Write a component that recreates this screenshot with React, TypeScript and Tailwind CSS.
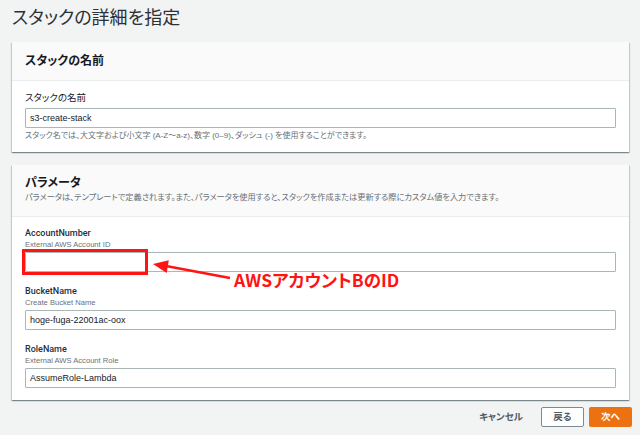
import React from "react";

const jp = "[font-family:'Liberation_Sans','Noto_Sans_CJK_JP',sans-serif] [font-feature-settings:'palt']";

function Field({ label, desc, value, mt }: { label: string; desc: string; value: string; mt: string }) {
  return (
    <div className={mt}>
      <div className="h-[12px] text-[9px] leading-[12px] font-medium text-[#232f3e] [font-family:Roboto,sans-serif]">{label}</div>
      <div className="h-[11px] text-[7.6px] leading-[11px] text-[#687078]">{desc}</div>
      <div className="mt-[2px] h-[20px] border border-[#aab7b8] rounded-[1px] bg-white px-[4px] text-[9px] leading-[18px] text-[#16191f]">
        {value}
      </div>
    </div>
  );
}

export default function App() {
  return (
    <div className={`relative w-[640px] h-[435px] overflow-hidden bg-[#f2f3f3] pl-[12px] pr-[11px] ${jp}`}>
      <div className="h-[42px] pt-[6px] text-[18px] leading-[24px] text-[#2d3035] font-normal">スタックの詳細を指定</div>

      {/* Card 1 */}
      <div className="bg-white shadow-[0_1px_1px_0_rgba(0,28,36,0.3),1px_1px_1px_0_rgba(0,28,36,0.15),-1px_1px_1px_0_rgba(0,28,36,0.15)]">
        <div className="h-[39px] bg-[#fafafa] border-b border-[#eaeded] px-[13px] flex items-center text-[12px] font-bold text-[#16191f]">
          スタックの名前
        </div>
        <div className="px-[13px] pt-[11px] pb-[10px]">
          <div className="h-[12px] text-[9.5px] leading-[12px] text-[#16191f]">スタックの名前</div>
          <div className="mt-[4px] h-[20px] border border-[#aab7b8] rounded-[1px] px-[4px] text-[9px] leading-[18px] text-[#16191f]">
            s3-create-stack
          </div>
          <div className="mt-[2px] h-[12px] text-[8px] leading-[12px] text-[#687078]">
            スタック名では、大文字および小文字 (A-Z〜a-z)、数字 (0–9)、ダッシュ (-) を使用することができます。
          </div>
        </div>
      </div>

      {/* Card 2 */}
      <div className="mt-[13px] bg-white shadow-[0_1px_1px_0_rgba(0,28,36,0.3),1px_1px_1px_0_rgba(0,28,36,0.15),-1px_1px_1px_0_rgba(0,28,36,0.15)]">
        <div className="h-[52px] bg-[#fafafa] border-b border-[#eaeded] px-[13px] pt-[10px]">
          <div className="h-[16px] text-[12px] leading-[16px] font-bold text-[#16191f]">パラメータ</div>
          <div className="mt-[1px] h-[12px] text-[8.2px] leading-[12px] text-[#687078]">
            パラメータは、テンプレートで定義されます。また、パラメータを使用すると、スタックを作成または更新する際にカスタム値を入力できます。
          </div>
        </div>
        <div className="px-[13px] pt-[10px] pb-[12px]">
          <Field mt="" label="AccountNumber" desc="External AWS Account ID" value="" />
          <Field mt="mt-[13px]" label="BucketName" desc="Create Bucket Name" value="hoge-fuga-22001ac-oox" />
          <Field mt="mt-[13px]" label="RoleName" desc="External AWS Account Role" value="AssumeRole-Lambda" />
        </div>
      </div>

      {/* Footer */}
      <div className="mt-[7px] -mr-[3px] flex items-center justify-end h-[20px]">
        <div className="px-[8px] text-[9.5px] font-bold text-[#545b64]">キャンセル</div>
        <div className="ml-[10px] h-[20px] w-[43px] border border-[#7d8998] rounded-[2px] bg-white flex items-center justify-center text-[9.5px] font-bold text-[#545b64]">
          戻る
        </div>
        <div className="ml-[5px] h-[20px] w-[43px] rounded-[2px] bg-[#ec7211] flex items-center justify-center text-[9.5px] font-bold text-white">
          次へ
        </div>
      </div>

      {/* Annotation overlay */}
      <div className="absolute left-[22px] top-[249px] w-[126px] h-[26px] border-[3px] border-[#ff1414]" />
      <svg className="absolute left-0 top-0" width="640" height="435" viewBox="0 0 640 435">
        <line x1="230" y1="278" x2="166" y2="266" stroke="#ff1414" strokeWidth="2.5" />
        <polygon points="153,264 168.8,260.3 166.7,273.1" fill="#ff1414" />
      </svg>
      <div className="absolute left-[234px] top-[270px] text-[17.5px] leading-[20px] font-bold text-[#ff1414] [font-family:'Noto_Sans_CJK_JP',sans-serif] whitespace-nowrap">
        AWSアカウントBのID
      </div>
    </div>
  );
}
